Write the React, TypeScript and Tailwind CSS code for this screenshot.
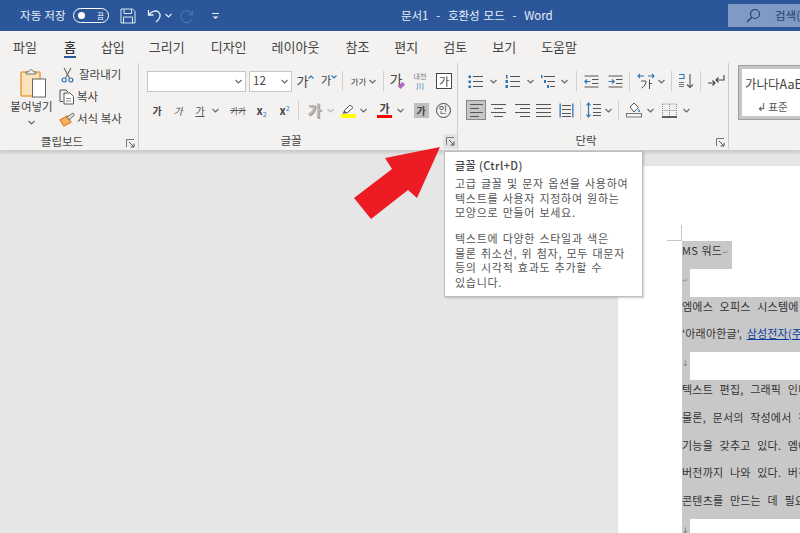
import React from "react";

const FONT = '"Noto Sans CJK KR", "Noto Sans", sans-serif';

function Chev({ cls = "" }: { cls?: string }) {
  return (
    <svg width="7" height="5" viewBox="0 0 7 5" className={"shrink-0 " + cls}>
      <path d="M0.5 1 L3.5 4 L6.5 1" fill="none" stroke="#666" strokeWidth="1.1" />
    </svg>
  );
}

function Sep({ cls = "" }: { cls?: string }) {
  return <div className={"w-px h-[20px] bg-[#d2d0ce] shrink-0 " + cls} />;
}

function Launcher() {
  return (
    <svg width="9" height="9" viewBox="0 0 9 9">
      <path d="M0.5 8 V0.5 H8" fill="none" stroke="#777" strokeWidth="1" />
      <path d="M3 3 L8 8 M8 4.5 V8 H4.5" fill="none" stroke="#555" strokeWidth="1" />
    </svg>
  );
}

function Lines({ rows }: { rows: [number, number][] }) {
  return (
    <svg width="15" height="15" viewBox="0 0 15 15" className="shrink-0">
      {rows.map(([a, b], i) => (
        <rect key={i} x={a} y={1 + i * 4} width={b - a} height="1" fill="#555" />
      ))}
    </svg>
  );
}

function ListIcon({ kind }: { kind: "bullet" | "num" | "multi" }) {
  const c = "#2e75b6";
  return (
    <svg width="16" height="15" viewBox="0 0 16 15" className="shrink-0">
      {kind === "bullet" && (
        <>
          <rect x="0.5" y="1.5" width="2.5" height="2.5" fill={c} />
          <rect x="0.5" y="6.5" width="2.5" height="2.5" fill={c} />
          <rect x="0.5" y="11.5" width="2.5" height="2.5" fill={c} />
        </>
      )}
      {kind === "num" && (
        <>
          <rect x="1" y="1" width="1.5" height="3.5" fill={c} />
          <rect x="0.5" y="6" width="2.5" height="3" fill={c} />
          <rect x="0.5" y="11" width="2.5" height="3" fill={c} />
        </>
      )}
      {kind === "multi" ? (
        <>
          <rect x="1" y="1" width="1.5" height="3" fill={c} />
          <rect x="4" y="6" width="2" height="3" fill={c} />
          <rect x="7" y="11" width="2" height="3" fill={c} />
          <rect x="4" y="2" width="11" height="1" fill="#555" />
          <rect x="7.5" y="7" width="7.5" height="1" fill="#555" />
          <rect x="10" y="12" width="5" height="1" fill="#555" />
        </>
      ) : (
        <>
          <rect x="5" y="2" width="10" height="1" fill="#555" />
          <rect x="5" y="7" width="10" height="1" fill="#555" />
          <rect x="5" y="12" width="10" height="1" fill="#555" />
        </>
      )}
    </svg>
  );
}

function Indent({ right }: { right?: boolean }) {
  return (
    <svg width="15" height="15" viewBox="0 0 15 15" className="shrink-0">
      <rect x="0.5" y="1.5" width="14" height="1" fill="#555" />
      <rect x="8" y="5" width="6.5" height="1" fill="#555" />
      <rect x="8" y="9" width="6.5" height="1" fill="#555" />
      <rect x="0.5" y="12.5" width="14" height="1" fill="#555" />
      {right ? (
        <path d="M0.5 7.5 H6 M4 5.5 L6.2 7.5 L4 9.5" fill="none" stroke="#2e75b6" strokeWidth="1.2" />
      ) : (
        <path d="M6.5 7.5 H1 M3 5.5 L0.8 7.5 L3 9.5" fill="none" stroke="#2e75b6" strokeWidth="1.2" />
      )}
    </svg>
  );
}

function Slot({ w, children, cls = "" }: { w: number; children: React.ReactNode; cls?: string }) {
  return (
    <div className={"flex items-center justify-center shrink-0 h-[22px] " + cls} style={{ width: w }}>
      {children}
    </div>
  );
}

const tabs: [string, string][] = [
  ["파일", "ml-[13px] mr-[27px]"],
  ["홈", "mr-[25px]"],
  ["삽입", "mr-[24px]"],
  ["그리기", "mr-[26px]"],
  ["디자인", "mr-[25px]"],
  ["레이아웃", "mr-[26px]"],
  ["참조", "mr-[25px]"],
  ["편지", "mr-[25px]"],
  ["검토", "mr-[25px]"],
  ["보기", "mr-[25px]"],
  ["도움말", ""],
];

const retFont = "font-['DejaVu_Sans'] text-[7.5px] text-[#999]";
const downFont = "font-['DejaVu_Sans'] text-[8px] text-[#777]";

const docLines: { t: React.ReactNode; w: string }[] = [
  { t: <>MS 워드<span className={retFont}>↵</span></>, w: "w-[50px] [word-spacing:1px]" },
  { t: <span className={retFont}>↵</span>, w: "w-[8px]" },
  { t: "엠에스 오피스 시스템에 포함되어 있는", w: "w-full [word-spacing:4px]" },
  { t: <>'아래아한글', <span className="text-[#0b3c9e] underline">삼성전자(주)에서</span></>, w: "w-full [word-spacing:2px]" },
  { t: <span className={downFont}>↓</span>, w: "w-[8px]" },
  { t: "텍스트 편집, 그래픽 인터페이스", w: "w-full [word-spacing:4px]" },
  { t: "물론, 문서의 작성에서 편집", w: "w-full [word-spacing:4px]" },
  { t: "기능을 갖추고 있다. 엠에스", w: "w-full [word-spacing:4px]" },
  { t: "버전까지 나와 있다. 버전별", w: "w-full [word-spacing:4px]" },
  { t: "콘텐츠를 만드는 데 필요한", w: "w-full [word-spacing:4px]" },
  { t: <span className={downFont}>↓</span>, w: "w-[8px]" },
];

export default function App() {
  return (
    <div className="relative w-[800px] h-[533px] overflow-hidden bg-[#e6e6e6] flex flex-col" style={{ fontFamily: FONT }}>
      {/* Title bar */}
      <div className="h-[31px] shrink-0 bg-[#2b579a] flex items-center text-white">
        <span className="ml-[20px] text-[11.5px] tracking-[0.2px] text-[#e8eef7]">자동 저장</span>
        <div className="ml-[7px] w-[36px] h-[15px] rounded-full border border-white flex items-center justify-between px-[4px]">
          <div className="w-[7px] h-[7px] rounded-full bg-white" />
          <span className="text-[7.5px] leading-none">끔</span>
        </div>
        <svg width="16" height="16" viewBox="0 0 16 16" className="ml-[11px]">
          <path d="M1 1 H12.5 L15 3.5 V15 H1 Z" fill="none" stroke="#dfe6f2" strokeWidth="1" />
          <path d="M4 1 V5.5 H11.5 V1 M3.5 15 V9 H12.5 V15" fill="none" stroke="#dfe6f2" strokeWidth="1" />
        </svg>
        <svg width="16" height="16" viewBox="0 0 16 16" className="ml-[11px]">
          <path d="M1.5 2 V7 H6.5 M1.8 6.8 C4 3.5 8.5 1.8 11.5 4 C14.5 6.5 13 11 9 14" fill="none" stroke="#e8eef7" strokeWidth="1.3" />
        </svg>
        <svg width="7" height="5" viewBox="0 0 7 5" className="ml-[2px]">
          <path d="M0.5 1 L3.5 4 L6.5 1" fill="none" stroke="#e8eef7" strokeWidth="1.1" />
        </svg>
        <svg width="16" height="16" viewBox="0 0 16 16" className="ml-[7px]">
          <path d="M13.5 2.5 V7 H9 M13 6.5 C11 2.5 6 1.5 3.5 4.5 C1 7.5 2 12 5 14 C8 15.5 12 14 13.5 11" fill="none" stroke="#4a72ae" strokeWidth="1.2" />
        </svg>
        <svg width="9" height="8" viewBox="0 0 9 8" className="ml-[16px]">
          <rect x="1" y="1" width="7" height="1" fill="#e8eef7" />
          <path d="M1.5 4.5 H7.5 L4.5 7 Z" fill="#e8eef7" />
        </svg>
        <span className="ml-[181px] text-[11.5px] whitespace-pre [word-spacing:1.3px] text-[#e8eef7]">문서1  -  호환성 모드  -  Word</span>
        <div className="ml-auto w-[72px] h-[23px] bg-[#7f9ac3] flex items-center">
          <svg width="15" height="15" viewBox="0 0 15 15" className="ml-[18px] shrink-0">
            <circle cx="9" cy="6" r="4.5" fill="none" stroke="#24406f" strokeWidth="1.1" />
            <path d="M5.8 9.2 L1 14" stroke="#24406f" strokeWidth="1.3" />
          </svg>
          <span className="ml-[14px] text-[11.5px] text-[#24406f] whitespace-nowrap overflow-hidden">검색(</span>
        </div>
      </div>

      {/* Tabs */}
      <div className="h-[31px] shrink-0 bg-[#f3f2f1] flex items-center text-[13px] text-[#444]">
        {tabs.map(([t, m]) => (
          <div key={t} className={"relative h-full flex items-center " + m}>
            <span className={t === "홈" ? "font-medium text-[#333]" : ""}>{t}</span>
            {t === "홈" && <div className="absolute left-0 right-0 bottom-[4px] h-[2.5px] bg-[#2b579a]" />}
          </div>
        ))}
      </div>

      {/* Ribbon */}
      <div className="h-[88px] shrink-0 bg-[#f3f2f1] flex shadow-[0_3px_3px_rgba(0,0,0,0.12)] relative z-10">
        {/* Clipboard */}
        <div className="relative w-[139px] shrink-0 my-[1px] flex flex-col border-r border-[#cfcdcb]">
          <div className="flex h-[71px]">
            <div className="w-[63px] shrink-0 flex flex-col items-center pt-[5px]">
              <svg width="28" height="30" viewBox="0 0 28 30" className="ml-[5px]">
                <rect x="1" y="4" width="19" height="24" rx="1" fill="#fbe3bd" stroke="#e8a33d" strokeWidth="1.6" />
                <path d="M6 6 V4 H8.5 C9 1 13 1 13.5 4 H16 V6 Z" fill="#f3f2f1" stroke="#777" strokeWidth="1" />
                <rect x="12.5" y="11" width="13" height="18" fill="#fff" stroke="#666" strokeWidth="1" />
              </svg>
              <span className="text-[11.5px] leading-none mt-[3px] text-[#444] whitespace-nowrap">붙여넣기</span>
              <Chev cls="mt-[7px]" />
            </div>
            <div className="flex flex-col pt-[1px] text-[11.5px] text-[#444] -ml-[7px]">
              <div className="h-[22px] flex items-center">
                <svg width="13" height="16" viewBox="0 0 13 16" className="ml-[5px]">
                  <path d="M3 1 L8.5 11 M10 1 L4.5 11" stroke="#666" strokeWidth="1.1" fill="none" />
                  <circle cx="3.2" cy="13" r="2" fill="none" stroke="#2e75b6" strokeWidth="1.2" />
                  <circle cx="9.8" cy="13" r="2" fill="none" stroke="#2e75b6" strokeWidth="1.2" />
                </svg>
                <span className="ml-[5px] whitespace-nowrap">잘라내기</span>
              </div>
              <div className="h-[22px] flex items-center">
                <svg width="16" height="16" viewBox="0 0 16 16" className="ml-[3px]">
                  <path d="M4 12.5 H1 V1 H7 L9 3" fill="none" stroke="#555" strokeWidth="1" />
                  <path d="M5 4 H11 L14.5 7.5 V15 H5 Z" fill="#fff" stroke="#555" strokeWidth="1" />
                  <path d="M7 9.5 H12 M7 12 H12" stroke="#888" strokeWidth="1" />
                </svg>
                <span className="ml-[2px] whitespace-nowrap">복사</span>
              </div>
              <div className="h-[22px] flex items-center">
                <svg width="16" height="15" viewBox="0 0 16 15" className="ml-[3px]">
                  <path d="M1 8 L8 4 L12 10 L5 14 Z" fill="#f5b25b" stroke="#e07a1f" strokeWidth="1.2" />
                  <path d="M8 5 L14 1 L15.5 3 L10 8 Z" fill="#ddd" stroke="#666" strokeWidth="0.9" />
                </svg>
                <span className="ml-[2px] whitespace-nowrap">서식 복사</span>
              </div>
            </div>
          </div>
          <div className="relative flex-1 flex items-center justify-center text-[11.5px] text-[#444] pt-[3px] pr-[14px]">
            클립보드
            <div className="absolute right-[3px] bottom-[2px]"><Launcher /></div>
          </div>
        </div>

        {/* Font */}
        <div className="relative w-[319px] shrink-0 border-r border-[#cfcdcb] my-[1px] flex flex-col">
          <div className="h-[71px] flex flex-col pt-[7px]">
            <div className="flex items-center h-[22px]">
              <div className="ml-[8px] w-[99px] h-[21px] bg-white border border-[#c8c6c4] flex items-center justify-end pr-[3px] shrink-0">
                <Chev />
              </div>
              <div className="ml-[3px] w-[43px] h-[21px] bg-white border border-[#c8c6c4] flex items-center justify-between px-[3px] shrink-0 text-[11.5px] text-[#444]">
                12<Chev />
              </div>
              <Slot w={25} cls="ml-[1px]">
                <span className="text-[13px] text-[#444]">가</span>
                <svg width="6" height="4" viewBox="0 0 6 4" className="-mt-[9px]"><path d="M0.5 3.5 L3 1 L5.5 3.5" fill="none" stroke="#2e75b6" strokeWidth="1.2" /></svg>
              </Slot>
              <Slot w={22}>
                <span className="text-[11.5px] text-[#444]">가</span>
                <svg width="6" height="4" viewBox="0 0 6 4" className="-mt-[9px]"><path d="M0.5 0.5 L3 3 L5.5 0.5" fill="none" stroke="#2e75b6" strokeWidth="1.2" /></svg>
              </Slot>
              <Sep cls="ml-[2px]" />
              <Slot w={31} cls="ml-[5px] gap-[3px]">
                <span className="text-[8.5px] text-[#444] whitespace-nowrap">가가</span>
                <Chev />
              </Slot>
              <Sep cls="ml-[4px]" />
              <Slot w={22} cls="ml-[3px]">
                <span className="text-[14px] text-[#444] -mt-[3px]">가</span>
                <svg width="9" height="9" viewBox="0 0 10 10" className="-ml-[5px] mt-[8px] relative"><path d="M1 6 L6 1 L9 4 L4 9 Z" fill="#b565c6" /></svg>
              </Slot>
              <Slot w={22}>
                <div className="flex flex-col items-center">
                  <span className="text-[7px] leading-[8px] text-[#777] whitespace-nowrap">내천</span>
                  <span className="text-[8px] text-[#2e75b6] leading-[8px] mt-[2px]">川</span>
                </div>
              </Slot>
              <Slot w={20} cls="ml-[3px]">
                <div className="w-[16px] h-[16px] border border-[#444] flex items-center justify-center bg-white text-[11px] text-[#444]">가</div>
              </Slot>
            </div>
            <div className="flex items-center h-[22px] mt-[7px]">
              <Slot w={22} cls="ml-[7px]"><span className="text-[10px] font-bold text-[#444]">가</span></Slot>
              <Slot w={20}><span className="text-[10px] italic text-[#555]">가</span></Slot>
              <Slot w={24}><span className="text-[10px] underline text-[#555]">가</span></Slot>
              <Chev cls="mr-[6px]" />
              <Slot w={26}><span className="text-[8.5px] line-through text-[#555] whitespace-nowrap">가가</span></Slot>
              <Slot w={21}>
                <span className="text-[11px] font-bold text-[#444]">x<sub className="text-[7px] font-normal text-[#2e75b6]">2</sub></span>
              </Slot>
              <Slot w={25}>
                <span className="text-[11px] font-bold text-[#444]">x<sup className="text-[7px] font-normal text-[#2e75b6]">2</sup></span>
              </Slot>
              <Sep cls="ml-[1px]" />
              <Slot w={29} cls="ml-[1px]"><span className="text-[15px] font-bold text-[#bbb] [text-shadow:1px_1px_0_#999]">가</span></Slot>
              <Chev cls="ml-[-2px] opacity-40" />
              <Slot w={20} cls="ml-[4px] flex-col">
                <svg width="15" height="11" viewBox="0 0 15 11">
                  <path d="M3 8 L9 2 L12 4.5 L6 10 Z" fill="#fff" stroke="#555" strokeWidth="1" />
                  <path d="M3 8 L1.5 10.5 H5.5" fill="#555" />
                </svg>
                <div className="w-[15px] h-[4px] bg-[#ffff00]" />
              </Slot>
              <Chev cls="ml-[2px]" />
              <Slot w={17} cls="ml-[9px] flex-col">
                <span className="text-[11px] font-bold leading-[13px] text-[#444]">가</span>
                <div className="w-[15px] h-[3px] bg-[#ff0000]" />
              </Slot>
              <Chev cls="ml-[4px]" />
              <Slot w={16} cls="ml-[9px]">
                <div className="w-[15px] h-[15px] bg-[#c0bfbe] flex items-center justify-center text-[10px] font-bold text-[#444]">가</div>
              </Slot>
              <Slot w={16} cls="ml-[6px]">
                <div className="w-[15px] h-[15px] rounded-full border border-[#444] flex items-center justify-center text-[9px] text-[#444]">인</div>
              </Slot>
            </div>
          </div>
          <div className="flex-1 flex items-center justify-center text-[11.5px] text-[#444] pt-[3px] pr-[14px]">글꼴</div>
          <div className="absolute right-0 bottom-0 w-[14px] h-[15px] bg-[#e4e3e2] flex items-center justify-center"><Launcher /></div>
        </div>

        {/* Paragraph */}
        <div className="relative w-[271px] shrink-0 border-r border-[#cfcdcb] my-[1px] flex flex-col">
          <div className="h-[71px] flex flex-col pt-[7px]">
            <div className="flex items-center h-[22px] pl-[10px]">
              <ListIcon kind="bullet" />
              <Chev cls="ml-[6px]" />
              <div className="ml-[8px]"><ListIcon kind="num" /></div>
              <Chev cls="ml-[6px]" />
              <div className="ml-[6px]"><ListIcon kind="multi" /></div>
              <Chev cls="ml-[5px]" />
              <Sep cls="ml-[8px]" />
              <div className="ml-[7px]"><Indent /></div>
              <div className="ml-[9px]"><Indent right /></div>
              <Sep cls="ml-[6px]" />
              <svg width="18" height="16" viewBox="0 0 18 16" className="ml-[7px] shrink-0">
                <path d="M1 3 H7 M3 1 L1 3 L3 5 M11 3 H17 M15 1 L17 3 L15 5" fill="none" stroke="#2e75b6" strokeWidth="1.1" />
                <path d="M4 8 H9 C9 11 7.5 13.5 4.5 15 M12.5 6.5 V16 M12.5 10.5 H15" fill="none" stroke="#555" strokeWidth="1" />
              </svg>
              <Chev cls="ml-[3px]" />
              <Sep cls="ml-[6px]" />
              <svg width="18" height="16" viewBox="0 0 18 16" className="ml-[5px] shrink-0">
                <path d="M2 1.5 H7 V5.5 H2" fill="none" stroke="#2e75b6" strokeWidth="1.1" />
                <path d="M2 9.5 H7 M2 11.5 H7 M2 13.5 H7" stroke="#777" strokeWidth="1" />
                <path d="M13 1 V14.5 M10 11.5 L13 14.5 L16 11.5" fill="none" stroke="#555" strokeWidth="1.1" />
              </svg>
              <Sep cls="ml-[5px]" />
              <svg width="18" height="14" viewBox="0 0 18 14" className="ml-[6px] shrink-0">
                <path d="M17 1 V6 H9 M11.5 3.5 L9 6 L11.5 8.5" fill="none" stroke="#444" strokeWidth="1.1" />
                <path d="M1 9 H8 M5.5 6.5 L8 9 L5.5 11.5" fill="none" stroke="#444" strokeWidth="1.1" />
              </svg>
            </div>
            <div className="flex items-center h-[22px] mt-[7px] pl-[8px]">
              <div className="w-[20px] h-[20px] bg-[#c8c6c4] border border-[#8a8886] flex items-center justify-center shrink-0">
                <Lines rows={[[1, 14], [1, 10], [1, 14], [1, 10]]} />
              </div>
              <div className="ml-[5px] w-[15px]"><Lines rows={[[0, 15], [3, 12], [0, 15], [3, 12]]} /></div>
              <div className="ml-[9px] w-[15px]"><Lines rows={[[0, 15], [5, 15], [0, 15], [5, 15]]} /></div>
              <div className="ml-[6px] w-[15px]"><Lines rows={[[0, 15], [0, 15], [0, 15], [0, 15]]} /></div>
              <svg width="15" height="15" viewBox="0 0 15 15" className="ml-[8px] shrink-0">
                <rect x="0.5" y="0.5" width="1.3" height="14" fill="#2e75b6" />
                <rect x="13.2" y="0.5" width="1.3" height="14" fill="#2e75b6" />
                <path d="M3 2.5 H12 M3 6.5 H12 M3 10.5 H12 M3 13.5 H12" stroke="#555" strokeWidth="1" />
              </svg>
              <Sep cls="ml-[6px]" />
              <svg width="16" height="16" viewBox="0 0 16 16" className="ml-[5px] shrink-0">
                <path d="M2.5 1 V15 M0.5 3.5 L2.5 1 L4.5 3.5 M0.5 12.5 L2.5 15 L4.5 12.5" fill="none" stroke="#2e75b6" strokeWidth="1.2" />
                <path d="M7 2.5 H15 M7 6.5 H15 M7 10.5 H15 M7 13.5 H15" stroke="#555" strokeWidth="1" />
              </svg>
              <Chev cls="ml-[3px]" />
              <Sep cls="ml-[6px]" />
              <svg width="16" height="16" viewBox="0 0 16 16" className="ml-[7px] shrink-0">
                <path d="M4 5 L8 1 L12.5 5.5 L8 10 Z" fill="#fff" stroke="#555" strokeWidth="1" />
                <path d="M13 7 C12 8.5 12 10 13 10 C14.5 10 14 8.5 13 7 Z" fill="#2e75b6" />
                <rect x="0.5" y="11.5" width="15" height="3.5" fill="#f3f2f1" stroke="#777" strokeWidth="1" />
              </svg>
              <Chev cls="ml-[5px]" />
              <svg width="15" height="15" viewBox="0 0 15 15" className="ml-[8px] shrink-0">
                <path d="M0.5 1 H14.5 M0.5 7.5 H14.5 M0.5 1 V14 M7.5 1 V14 M14.5 1 V14" fill="none" stroke="#888" strokeWidth="1" strokeDasharray="1 1" />
                <path d="M0 14 H15" stroke="#222" strokeWidth="1.4" />
              </svg>
              <Chev cls="ml-[6px]" />
            </div>
          </div>
          <div className="flex-1 flex items-center justify-center text-[11.5px] text-[#444] pt-[3px] pr-[14px]">단락</div>
          <div className="absolute right-[3px] bottom-[2px]"><Launcher /></div>
        </div>

        {/* Styles gallery */}
        <div className="flex-1 pl-[10px] pt-[4px] overflow-hidden">
          <div className="w-[80px] h-[53px] bg-white border-[3px] border-[#c8c6c4] outline outline-1 outline-[#a19f9d] flex flex-col items-start pl-[3px]">
            <span className="text-[12.5px] text-[#444] whitespace-nowrap mt-[6px] leading-[18px]">가나다AaBbCc</span>
            <span className="text-[10.5px] text-[#555] ml-[12px] mt-[7px] leading-[14px] whitespace-nowrap">↲ 표준</span>
          </div>
        </div>
      </div>

      {/* Document canvas */}
      <div className="flex-1 min-h-0 flex justify-end">
        <div className="relative w-[182px] mt-[16px] bg-white pt-[75px] pl-[64px] text-[11px] text-[#333] overflow-hidden">
          <div className="absolute left-[49px] top-[74px] w-[15px] h-px bg-[#c8c6c4]" />
          <div className="absolute left-[63px] top-[59px] w-px h-[15px] bg-[#c8c6c4]" />
          {docLines.map((l, i) => (
            <div key={i} className={"h-[27.8px] leading-[19px] tracking-[0.2px] whitespace-nowrap overflow-hidden bg-[#c8c8c8] " + l.w}>
              {l.t}
            </div>
          ))}
        </div>
      </div>

      {/* Tooltip */}
      <div className="absolute left-[444px] top-[151px] w-[199px] h-[146px] bg-white border border-[#bebebe] shadow-[1px_1px_2px_rgba(0,0,0,0.2)] z-20 pl-[10px] pt-[5px] text-[#555]">
        <div className="text-[11px] font-medium leading-[16px] tracking-[0.4px] text-[#444]">글꼴 (Ctrl+D)</div>
        <div className="text-[11px] leading-[14.5px] mt-[3px] tracking-[0.7px] [word-spacing:1.2px] whitespace-nowrap">
          고급 글꼴 및 문자 옵션을 사용하여<br />
          텍스트를 사용자 지정하여 원하는<br />
          모양으로 만들어 보세요.
        </div>
        <div className="text-[11px] leading-[14.5px] mt-[11.5px] tracking-[0.7px] [word-spacing:1.2px] whitespace-nowrap">
          텍스트에 다양한 스타일과 색은<br />
          물론 취소선, 위 첨자, 모두 대문자<br />
          등의 시각적 효과도 추가할 수<br />
          있습니다.
        </div>
      </div>

      {/* Arrow */}
      <svg width="100" height="80" viewBox="0 0 100 80" className="absolute left-[350px] top-[143px] z-20">
        <polygon points="90,4 35,15 42,26 4,55 21,76 58,47 67,55" fill="#ed1c24" />
      </svg>
    </div>
  );
}
